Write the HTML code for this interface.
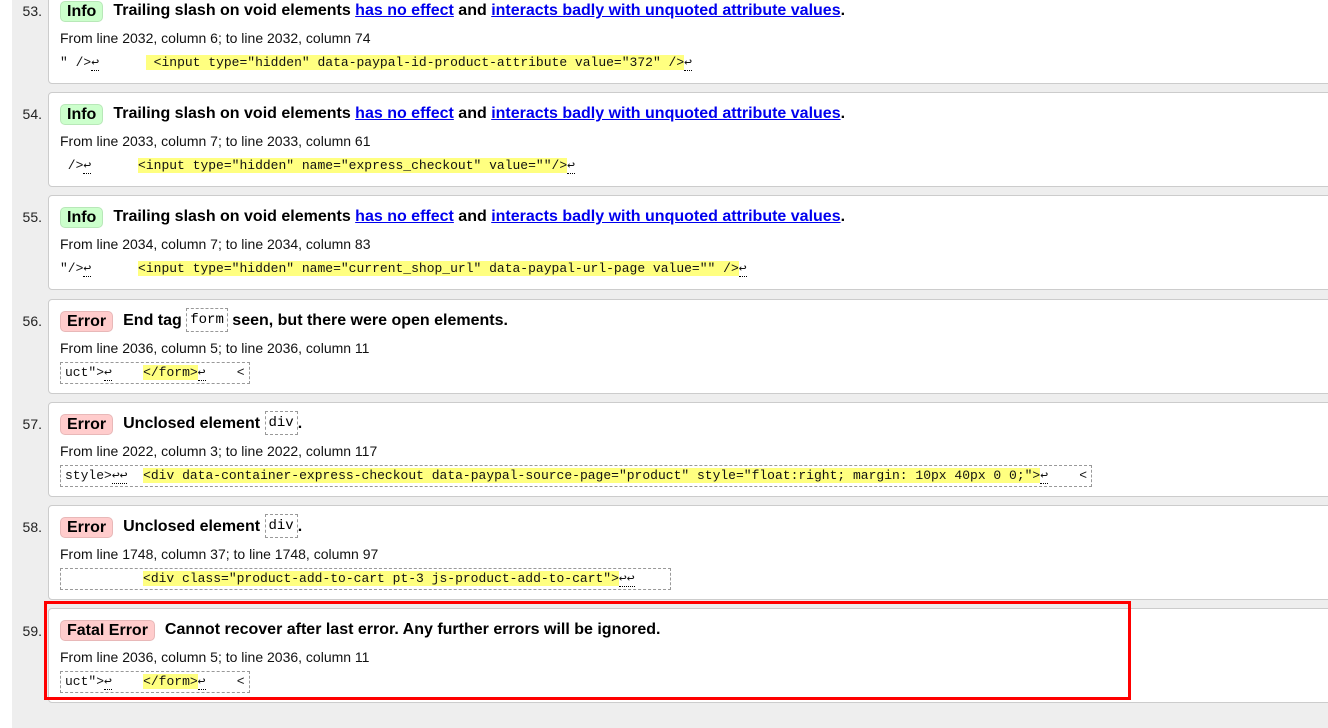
<!DOCTYPE html>
<html><head><meta charset="utf-8"><style>
html,body{margin:0;padding:0;width:1328px;height:728px;overflow:hidden;background:#fff;font-family:"Liberation Sans",Arial,sans-serif;}
#bg{position:absolute;left:12px;top:0;width:1316px;height:728px;background:#eee;}
.card{position:absolute;left:48px;width:1300px;height:93px;background:#fff;border:1px solid #ccc;border-radius:4px;box-sizing:content-box;}
.num{position:absolute;left:0;width:42px;text-align:right;font-size:14px;color:#222;}
.t{position:absolute;left:11px;top:10px;height:22px;line-height:22px;font-size:16px;font-weight:bold;color:#000;white-space:nowrap;}
.b{display:inline-block;height:19px;line-height:19px;padding:0 6px;border-radius:5px;margin-right:10px;vertical-align:top;margin-top:1px;}
.info{background:#ccffcc;border:1px solid #b8e8b8;}
.err{background:#ffcccc;border:1px solid #e8b8b8;}
a{color:#0000ee;text-decoration:underline;}
.f{position:absolute;left:11px;top:39px;font-size:14px;line-height:18px;color:#111;white-space:nowrap;}
.c{position:absolute;left:11px;top:63px;height:20px;line-height:20px;font-family:"Liberation Mono","DejaVu Sans Mono",monospace;font-size:13px;white-space:pre;color:#111;padding:0;}
.d{border:1px dashed #999;top:62px;padding:0 4px;}
.h{background:#ffff80;}
.r{border-bottom:1px dotted #000;font-size:13px;}
.ct{font-family:"Liberation Mono",monospace;font-weight:normal;font-size:14px;border:1px dashed #999;padding:0 3px;display:inline-block;line-height:22px;margin-top:-2px;vertical-align:top;}
#red{position:absolute;left:44px;top:601px;width:1081px;height:93px;border:3px solid #f00;}
</style></head><body>
<div id="bg"></div>

<div class="num" style="top:3px">53.</div>
<div class="card" style="top:-11px">
<div class="t"><span class="b info">Info</span>Trailing slash on void elements <a>has no effect</a> and <a>interacts badly with unquoted attribute values</a>.</div>
<div class="f">From line 2032, column 6; to line 2032, column 74</div>
<div class="c">" /&gt;<span class="r">↩</span>      <span class="h"> &lt;input type="hidden" data-paypal-id-product-attribute value="372" /&gt;</span><span class="r">↩</span></div>
</div>

<div class="num" style="top:106px">54.</div>
<div class="card" style="top:92px">
<div class="t"><span class="b info">Info</span>Trailing slash on void elements <a>has no effect</a> and <a>interacts badly with unquoted attribute values</a>.</div>
<div class="f">From line 2033, column 7; to line 2033, column 61</div>
<div class="c"> /&gt;<span class="r">↩</span>      <span class="h">&lt;input type="hidden" name="express_checkout" value=""/&gt;</span><span class="r">↩</span></div>
</div>

<div class="num" style="top:209px">55.</div>
<div class="card" style="top:195px">
<div class="t"><span class="b info">Info</span>Trailing slash on void elements <a>has no effect</a> and <a>interacts badly with unquoted attribute values</a>.</div>
<div class="f">From line 2034, column 7; to line 2034, column 83</div>
<div class="c">"/&gt;<span class="r">↩</span>      <span class="h">&lt;input type="hidden" name="current_shop_url" data-paypal-url-page value="" /&gt;</span><span class="r">↩</span></div>
</div>

<div class="num" style="top:313px">56.</div>
<div class="card" style="top:299px">
<div class="t"><span class="b err">Error</span>End tag <span class="ct">form</span> seen, but there were open elements.</div>
<div class="f">From line 2036, column 5; to line 2036, column 11</div>
<div class="c d">uct"&gt;<span class="r">↩</span>    <span class="h">&lt;/form&gt;</span><span class="r">↩</span>    &lt;</div>
</div>

<div class="num" style="top:416px">57.</div>
<div class="card" style="top:402px">
<div class="t"><span class="b err">Error</span>Unclosed element <span class="ct">div</span>.</div>
<div class="f">From line 2022, column 3; to line 2022, column 117</div>
<div class="c d">style&gt;<span class="r">↩↩</span>  <span class="h">&lt;div data-container-express-checkout data-paypal-source-page="product" style="float:right; margin: 10px 40px 0 0;"&gt;</span><span class="r">↩</span>    &lt;</div>
</div>

<div class="num" style="top:519px">58.</div>
<div class="card" style="top:505px">
<div class="t"><span class="b err">Error</span>Unclosed element <span class="ct">div</span>.</div>
<div class="f">From line 1748, column 37; to line 1748, column 97</div>
<div class="c d">          <span class="h">&lt;div class="product-add-to-cart pt-3 js-product-add-to-cart"&gt;</span><span class="r">↩↩</span>    </div>
</div>

<div class="num" style="top:623px">59.</div>
<div class="card" style="top:608px">
<div class="t"><span class="b err">Fatal Error</span>Cannot recover after last error. Any further errors will be ignored.</div>
<div class="f">From line 2036, column 5; to line 2036, column 11</div>
<div class="c d">uct"&gt;<span class="r">↩</span>    <span class="h">&lt;/form&gt;</span><span class="r">↩</span>    &lt;</div>
</div>
<div id="red"></div>
</body></html>
